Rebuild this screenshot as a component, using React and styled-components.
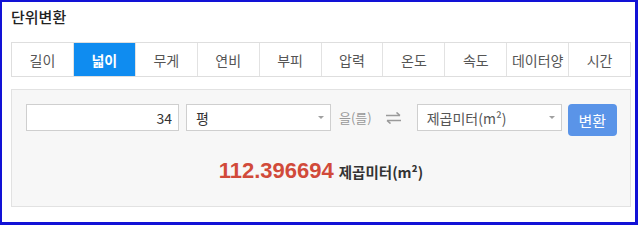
import React, { useState } from "react";
import styled, { createGlobalStyle } from "styled-components";

const GlobalStyle = createGlobalStyle`
  body {
    margin: 0;
    background: #fff;
    font-family: "Noto Sans CJK KR", "Noto Sans", sans-serif;
  }
`;

const Frame = styled.div`
  width: 638px;
  height: 225px;
  box-sizing: border-box;
  border-style: solid;
  border-color: #1212d6;
  border-width: 2px 3px 3px 2px;
  padding: 4px 0 0 9px;
  background: #fff;
`;

const Title = styled.h2`
  margin: 0;
  font-size: 15px;
  line-height: 22px;
  font-weight: 500;
  color: #222;
`;

const Tabs = styled.ul`
  display: flex;
  width: 620px;
  margin: 14px 0 0;
  padding: 0;
  list-style: none;
  border: 1px solid #dedede;
  box-sizing: border-box;
`;

const Tab = styled.li`
  flex: 1;
  height: 33px;
  display: flex;
  align-items: center;
  justify-content: center;
  font-size: 14px;
  color: ${(p) => (p.$active ? "#fff" : "#555")};
  font-weight: ${(p) => (p.$active ? 700 : 400)};
  background: ${(p) => (p.$active ? "#0f8cf0" : "#fff")};
  border-left: ${(p) => (p.$first ? "none" : "1px solid #e2e2e2")};
  cursor: pointer;
`;

const Panel = styled.div`
  width: 620px;
  height: 118px;
  box-sizing: border-box;
  margin-top: 12px;
  padding: 14px 0 0 14px;
  background: #f7f7f7;
  border: 1px solid #e2e2e2;
`;

const Row = styled.div`
  display: flex;
  align-items: flex-start;
`;

const NumberInput = styled.input`
  width: 153px;
  height: 27px;
  box-sizing: border-box;
  border: 1px solid #cfcfcf;
  background: #fff;
  padding: 0 6px;
  text-align: right;
  font-family: inherit;
  font-size: 14px;
  color: #333;
  outline: none;
`;

const SelectBox = styled.div`
  width: 145px;
  height: 27px;
  box-sizing: border-box;
  margin-left: ${(p) => p.$ml}px;
  border: 1px solid #cfcfcf;
  background: #fff;
  display: flex;
  align-items: center;
  justify-content: space-between;
  padding: 0 6px 0 9px;
  font-size: 14px;
  color: ${(p) => p.$color};
`;

const Caret = styled.span`
  width: 0;
  height: 0;
  border-left: 3px solid transparent;
  border-right: 3px solid transparent;
  border-top: 3px solid #a0a0a0;
`;

const Particle = styled.span`
  margin-left: 8px;
  line-height: 27px;
  font-size: 13px;
  color: #999;
`;

const Swap = styled.span`
  display: flex;
  align-items: center;
  height: 27px;
  margin-left: 13px;
  color: #9a9a9a;
`;

const Button = styled.button`
  width: 49px;
  height: 32px;
  margin-left: 6px;
  border: none;
  border-radius: 4px;
  background: #5a94e8;
  color: #fff;
  font-family: inherit;
  font-size: 15px;
  padding: 0;
`;

const Result = styled.div`
  display: flex;
  align-items: baseline;
  justify-content: center;
  margin-top: 22px;
  padding-right: 14px;
  gap: 5px;
`;

const Value = styled.span`
  font-size: 22px;
  font-weight: 700;
  color: #d14a3a;
  font-family: "Liberation Sans", Arial, sans-serif;
`;

const Unit = styled.span`
  font-size: 14.5px;
  font-weight: 700;
  color: #333;
`;

const tabs = ["길이", "넓이", "무게", "연비", "부피", "압력", "온도", "속도", "데이터양", "시간"];

export default function App() {
  const [active, setActive] = useState(1);
  const [value, setValue] = useState("34");

  return (
    <>
      <GlobalStyle />
      <Frame>
        <Title>단위변환</Title>
        <Tabs>
          {tabs.map((t, i) => (
            <Tab key={t} $first={i === 0} $active={i === active} onClick={() => setActive(i)}>
              {t}
            </Tab>
          ))}
        </Tabs>
        <Panel>
          <Row>
            <NumberInput value={value} onChange={(e) => setValue(e.target.value)} />
            <SelectBox $ml={7} $color="#333">
              평<Caret />
            </SelectBox>
            <Particle>을(를)</Particle>
            <Swap>
              <svg width="17" height="12" viewBox="0 0 17 12" fill="none" stroke="currentColor" strokeWidth="1.6">
                <path d="M1 3.5h14M11.5 0.5l3.5 3" />
                <path d="M16 8.5H2M5.5 11.5L2 8.5" />
              </svg>
            </Swap>
            <SelectBox $ml={15} $color="#555">
              제곱미터(m²)<Caret />
            </SelectBox>
            <Button>변환</Button>
          </Row>
          <Result>
            <Value>112.396694</Value>
            <Unit>제곱미터(m²)</Unit>
          </Result>
        </Panel>
      </Frame>
    </>
  );
}
